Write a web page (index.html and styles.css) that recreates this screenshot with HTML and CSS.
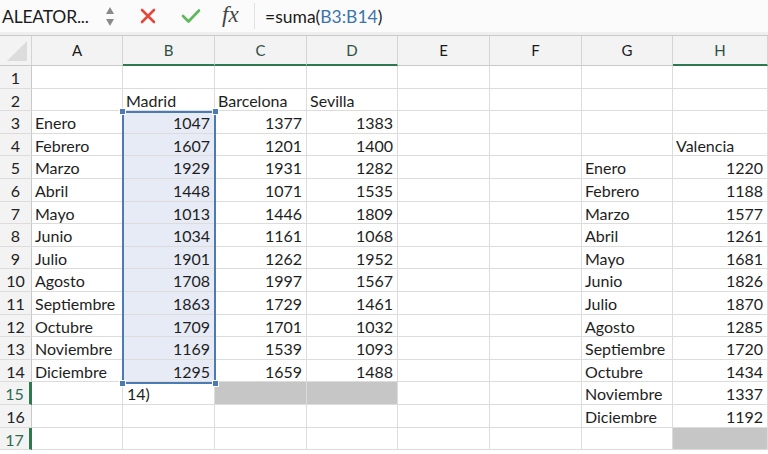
FILE: index.html
```html
<!DOCTYPE html>
<html lang="es">
<head>
<meta charset="utf-8">
<link rel="stylesheet" href="styles.css">
</head>
<body>
<div class="app">
  <div class="fbar">
    <div class="namebox">ALEATOR...</div>
    <div class="spin"><span class="up"></span><span class="down"></span></div>
    <div class="icon x-icon"><svg width="16" height="16" viewBox="0 0 16 16"><path d="M2 2 L14 14 M14 2 L2 14" stroke="#e1483c" stroke-width="2.6" stroke-linecap="round"/></svg></div>
    <div class="icon ok-icon"><svg width="20" height="16" viewBox="0 0 20 16"><path d="M2 8 L7.5 13.5 L18 2.5" fill="none" stroke="#5cb85c" stroke-width="2.6" stroke-linecap="round" stroke-linejoin="round"/></svg></div>
    <div class="fx">fx</div>
    <div class="formula">=suma(<span class="ref">B3:B14</span>)</div>
  </div>
  <div class="sheet">
    <div class="row head">
      <div class="c corner"><span class="tri"></span></div>
      <div class="c">A</div><div class="c hl">B</div><div class="c hl">C</div><div class="c hl">D</div>
      <div class="c">E</div><div class="c">F</div><div class="c">G</div><div class="c hl">H</div>
    </div>
    <div class="row"><div class="c rh">1</div><div class="c"></div><div class="c"></div><div class="c"></div><div class="c"></div><div class="c"></div><div class="c"></div><div class="c"></div><div class="c"></div></div>
    <div class="row"><div class="c rh">2</div><div class="c"></div><div class="c">Madrid</div><div class="c">Barcelona</div><div class="c">Sevilla</div><div class="c"></div><div class="c"></div><div class="c"></div><div class="c"></div></div>
    <div class="row"><div class="c rh">3</div><div class="c">Enero</div><div class="c n sel">1047</div><div class="c n">1377</div><div class="c n">1383</div><div class="c"></div><div class="c"></div><div class="c"></div><div class="c"></div></div>
    <div class="row"><div class="c rh">4</div><div class="c">Febrero</div><div class="c n sel">1607</div><div class="c n">1201</div><div class="c n">1400</div><div class="c"></div><div class="c"></div><div class="c"></div><div class="c">Valencia</div></div>
    <div class="row"><div class="c rh">5</div><div class="c">Marzo</div><div class="c n sel">1929</div><div class="c n">1931</div><div class="c n">1282</div><div class="c"></div><div class="c"></div><div class="c">Enero</div><div class="c n">1220</div></div>
    <div class="row"><div class="c rh">6</div><div class="c">Abril</div><div class="c n sel">1448</div><div class="c n">1071</div><div class="c n">1535</div><div class="c"></div><div class="c"></div><div class="c">Febrero</div><div class="c n">1188</div></div>
    <div class="row"><div class="c rh">7</div><div class="c">Mayo</div><div class="c n sel">1013</div><div class="c n">1446</div><div class="c n">1809</div><div class="c"></div><div class="c"></div><div class="c">Marzo</div><div class="c n">1577</div></div>
    <div class="row"><div class="c rh">8</div><div class="c">Junio</div><div class="c n sel">1034</div><div class="c n">1161</div><div class="c n">1068</div><div class="c"></div><div class="c"></div><div class="c">Abril</div><div class="c n">1261</div></div>
    <div class="row"><div class="c rh">9</div><div class="c">Julio</div><div class="c n sel">1901</div><div class="c n">1262</div><div class="c n">1952</div><div class="c"></div><div class="c"></div><div class="c">Mayo</div><div class="c n">1681</div></div>
    <div class="row"><div class="c rh">10</div><div class="c">Agosto</div><div class="c n sel">1708</div><div class="c n">1997</div><div class="c n">1567</div><div class="c"></div><div class="c"></div><div class="c">Junio</div><div class="c n">1826</div></div>
    <div class="row"><div class="c rh">11</div><div class="c">Septiembre</div><div class="c n sel">1863</div><div class="c n">1729</div><div class="c n">1461</div><div class="c"></div><div class="c"></div><div class="c">Julio</div><div class="c n">1870</div></div>
    <div class="row"><div class="c rh">12</div><div class="c">Octubre</div><div class="c n sel">1709</div><div class="c n">1701</div><div class="c n">1032</div><div class="c"></div><div class="c"></div><div class="c">Agosto</div><div class="c n">1285</div></div>
    <div class="row"><div class="c rh">13</div><div class="c">Noviembre</div><div class="c n sel">1169</div><div class="c n">1539</div><div class="c n">1093</div><div class="c"></div><div class="c"></div><div class="c">Septiembre</div><div class="c n">1720</div></div>
    <div class="row"><div class="c rh">14</div><div class="c">Diciembre</div><div class="c n sel">1295</div><div class="c n">1659</div><div class="c n">1488</div><div class="c"></div><div class="c"></div><div class="c">Octubre</div><div class="c n">1434</div></div>
    <div class="row"><div class="c rh act">15</div><div class="c"></div><div class="c edit">14)</div><div class="c gray"></div><div class="c gray"></div><div class="c"></div><div class="c"></div><div class="c">Noviembre</div><div class="c n">1337</div></div>
    <div class="row"><div class="c rh">16</div><div class="c"></div><div class="c"></div><div class="c"></div><div class="c"></div><div class="c"></div><div class="c"></div><div class="c">Diciembre</div><div class="c n">1192</div></div>
    <div class="row"><div class="c rh act">17</div><div class="c"></div><div class="c"></div><div class="c"></div><div class="c"></div><div class="c"></div><div class="c"></div><div class="c"></div><div class="c gray"></div></div>
    <div class="selbox">
      <span class="h tl"></span><span class="h tr"></span><span class="h bl"></span><span class="h br"></span>
    </div>
  </div>
</div>
</body>
</html>
```
FILE: styles.css
```css
* { box-sizing: border-box; }
html, body { margin: 0; padding: 0; }
body {
  width: 768px;
  height: 454px;
  overflow: hidden;
  background: #fff;
  font-family: "Lato", "Open Sans", sans-serif;
  color: #1e1e1e;
}
.app { display: flex; flex-direction: column; }

.fbar {
  height: 36px;
  display: flex;
  align-items: center;
  background: #fbfbfb;
  border-bottom: 1px solid #c9c9c9;
  box-shadow: inset 0 -3px 0 #efefef;
  padding-bottom: 3px;
}
.namebox {
  width: 100px;
  padding-left: 2px;
  font-size: 17.5px;
  letter-spacing: -0.2px;
  color: #1b1b1b;
}
.spin {
  width: 20px;
  display: flex;
  flex-direction: column;
  align-items: center;
  gap: 5px;
}
.spin span { width: 0; height: 0; border-left: 4px solid transparent; border-right: 4px solid transparent; }
.spin .up { border-bottom: 7px solid #8a8a8a; }
.spin .down { border-top: 7px solid #8a8a8a; }
.icon { display: flex; align-items: center; }
.x-icon { margin-left: 20px; }
.ok-icon { margin-left: 25px; }
.fx {
  margin-left: 21px;
  font-family: "Liberation Serif", serif;
  font-style: italic;
  font-size: 23px;
  color: #444;
  width: 33px;
  height: 26px;
  line-height: 24px;
  border-right: 1px solid #e2e2e2;
}
.formula {
  margin-left: 10px;
  font-size: 17.5px;
  color: #1b1b1b;
}
.ref { color: #3d74ae; }

.sheet { position: relative; }
.row {
  display: grid;
  grid-template-columns: 32px 91px 92px 92px 91px 92px 92px 91px 95px;
  height: 22.6px;
}
.c {
  border-right: 1px solid #dcdcdc;
  border-bottom: 1px solid #dcdcdc;
  font-size: 16px;
  line-height: 23px;
  padding: 0 3px;
  white-space: nowrap;
  overflow: hidden;
}
.n { text-align: right; padding-right: 4px; }
.sel { background: #e6ebf6; }
.gray { background: #c6c6c6; }
.edit { padding-left: 4px; }

.head { height: 30px; background: #f3f3f3; }
.head .c {
  text-align: center;
  line-height: 29px;
  font-size: 15px;
  border-right: 1px solid #d4d4d4;
  border-bottom: 1px solid #c9c9c9;
  color: #1a1a1a;
}
.head .hl { border-bottom: 2px solid #2e7a4e; color: #2f4f42; }
.corner { position: relative; }
.tri {
  position: absolute;
  right: 4px;
  bottom: 4px;
  width: 0; height: 0;
  border-left: 20px solid transparent;
  border-bottom: 20px solid #dcdcdc;
}
.rh {
  background: #f3f3f3;
  text-align: center;
  padding: 0;
  font-size: 16px;
  color: #222;
  border-right: 1px solid #c9c9c9;
}
.rh.act { border-right: 3px solid #2e7a4e; color: #2f6b52; }

.selbox {
  position: absolute;
  left: 122px;
  top: 75px;
  width: 94px;
  height: 273px;
  border: 2px solid #4c7ab3;
  pointer-events: none;
}
.h {
  position: absolute;
  width: 7px;
  height: 7px;
  background: #4c7ab3;
  border: 1px solid #fff;
}
.tl { left: -5px; top: -5px; }
.tr { right: -5px; top: -5px; }
.bl { left: -5px; bottom: -5px; }
.br { right: -5px; bottom: -5px; }
```
